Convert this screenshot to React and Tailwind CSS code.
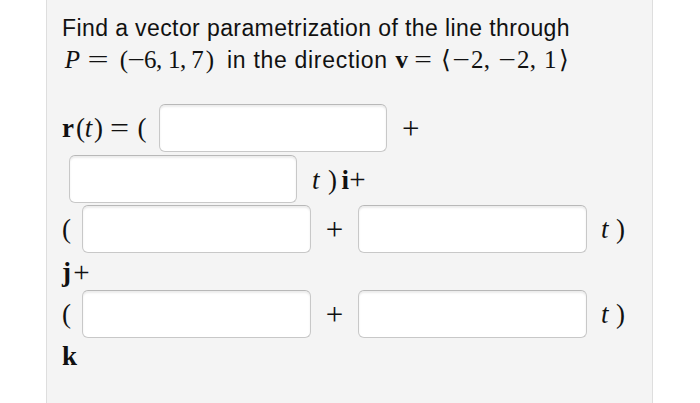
import React from "react";

const serif = { fontFamily: '"Liberation Serif", "Times New Roman", serif' };

function Box({ w = "w-[228px]" }) {
  return (
    <div
      className={`${w} h-[48px] shrink-0 rounded-[6px] border border-[#c8c8c8] border-t-[#b8b8b8] bg-white shadow-[inset_0_2px_2px_rgba(0,0,0,0.08)]`}
    />
  );
}

function C({ w, children, className = "", align = "text-center" }) {
  return (
    <span
      className={`inline-block shrink-0 ${w} ${align} leading-none whitespace-nowrap ${className}`}
      style={serif}
    >
      {children}
    </span>
  );
}

function Wide({ children, s = "scale-x-150" }) {
  return <span className={`inline-block ${s}`}>{children}</span>;
}

function Plus({ className = "" }) {
  return (
    <span className={`leading-none text-[31px] ${className}`} style={serif}>
      +
    </span>
  );
}

export default function App() {
  return (
    <div className="w-[700px] h-[403px] overflow-hidden bg-white text-[#111]">
      <div className="ml-[46px] w-[607px] h-[403px] border-x border-[#dedede] bg-[#f4f4f4] pl-[15px] pt-[10px]">
        <div className="h-[36px] leading-[36px] text-[23px] font-['Liberation_Sans',Arial,sans-serif] tracking-[0.4px] whitespace-nowrap">
          Find a vector parametrization of the line through
        </div>

        <div className="flex h-[36px] items-baseline pt-[1px] text-[25px] whitespace-nowrap">
          <C w="w-[21px]" className="italic">P</C>
          <C w="w-[30px]"><Wide>=</Wide></C>
          <C w="w-[15px]" align="text-right">(</C>
          <C w="w-[16px]"><Wide s="scale-x-125">−</Wide></C>
          <C w="w-[12px]">6</C>
          <C w="w-[12px]" align="text-left">,</C>
          <C w="w-[12px]">1</C>
          <C w="w-[11px]" align="text-left">,</C>
          <C w="w-[13px]">7</C>
          <C w="w-[10px]" align="text-right">)</C>
          <span className="ml-[13px] text-[23px] leading-none tracking-[0.7px] font-['Liberation_Sans',Arial,sans-serif]">
            in the direction
          </span>
          <C w="w-[18px]" className="ml-[5px] font-bold">v</C>
          <C w="w-[24px]"><Wide s="scale-x-125">=</Wide></C>
          <C w="w-[16px]" align="text-right">⟨</C>
          <C w="w-[20px]"><Wide s="scale-x-125">−</Wide></C>
          <C w="w-[13px]">2</C>
          <C w="w-[13px]" align="text-left">,</C>
          <C w="w-[20px]"><Wide s="scale-x-125">−</Wide></C>
          <C w="w-[13px]">2</C>
          <C w="w-[14px]" align="text-left">,</C>
          <C w="w-[13px]">1</C>
          <C w="w-[12px]" align="text-right">⟩</C>
        </div>

        {/* r(t) row */}
        <div className="mt-[22px] flex h-[48px] items-center">
          <div className="flex w-[97px] shrink-0 items-baseline text-[27px]">
            <C w="w-[14px]" align="text-left" className="font-bold">r</C>
            <C w="w-[7px]">(</C>
            <C w="w-[11px]" className="italic">t</C>
            <C w="w-[9px]">)</C>
            <C w="w-[34px]"><Wide s="scale-x-125">=</Wide></C>
            <C w="w-[10px]">(</C>
          </div>
          <Box />
          <Plus className="ml-[15px]" />
        </div>

        {/* row 2 */}
        <div className="mt-[3px] flex h-[48px] items-center">
          <div className="ml-[7px]"><Box /></div>
          <div className="ml-[15px] flex items-baseline text-[27px]">
            <C w="w-[12px]" align="text-left" className="italic">t</C>
            <C w="w-[13px]" align="text-right">)</C>
            <C w="w-[12px]" align="text-right" className="font-bold">i</C>
            <C w="w-[17px]" className="text-[29px]">+</C>
          </div>
        </div>

        {/* row 3 */}
        <div className="mt-[2px] flex h-[48px] items-center">
          <div className="w-[20px] shrink-0 text-[27px] leading-none" style={serif}>(</div>
          <Box w="w-[229px]" />
          <div className="flex w-[47px] shrink-0 justify-center"><Plus /></div>
          <Box w="w-[229px]" />
          <div className="ml-[14px] flex items-baseline text-[27px]">
            <C w="w-[12px]" align="text-left" className="italic">t</C>
            <C w="w-[12px]" align="text-right">)</C>
          </div>
        </div>

        <div className="flex h-[37px] items-center pt-[2px] text-[27px]">
          <C w="w-[11px]" align="text-left" className="font-bold">j</C>
          <C w="w-[17px]" className="text-[29px]">+</C>
        </div>

        {/* row 4 */}
        <div className="flex h-[48px] items-center">
          <div className="w-[20px] shrink-0 text-[27px] leading-none" style={serif}>(</div>
          <Box w="w-[229px]" />
          <div className="flex w-[47px] shrink-0 justify-center"><Plus /></div>
          <Box w="w-[229px]" />
          <div className="ml-[14px] flex items-baseline text-[27px]">
            <C w="w-[12px]" align="text-left" className="italic">t</C>
            <C w="w-[12px]" align="text-right">)</C>
          </div>
        </div>

        <div className="flex h-[37px] items-center text-[27px]">
          <C w="w-[16px]" align="text-left" className="font-bold">k</C>
        </div>
      </div>
    </div>
  );
}
